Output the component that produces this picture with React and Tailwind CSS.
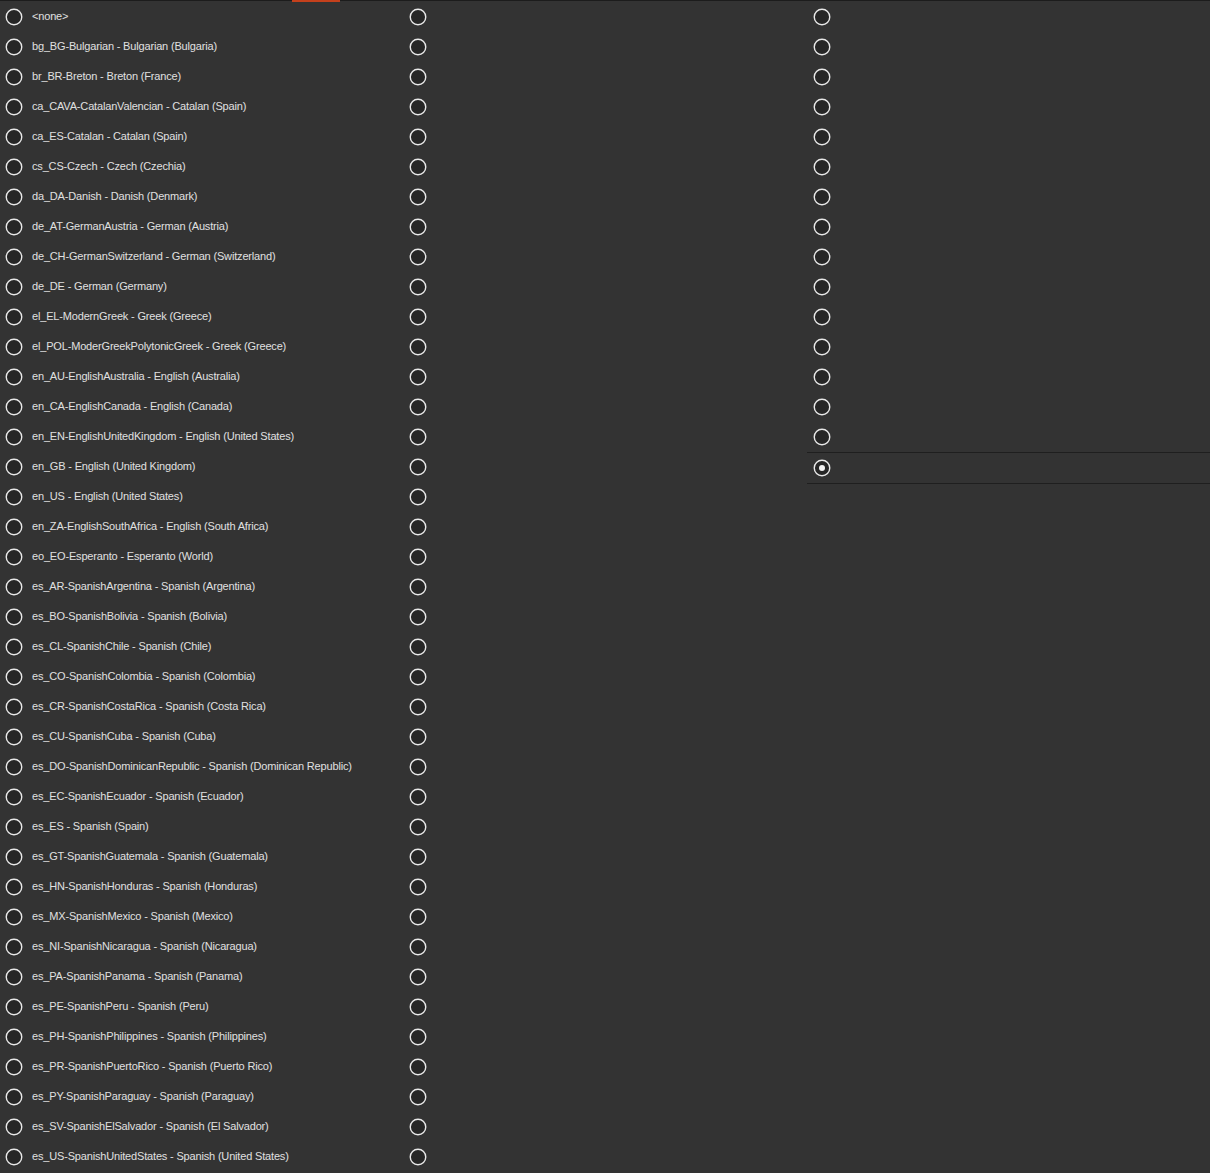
import React from "react";

const langs = [
  "<none>",
  "bg_BG-Bulgarian - Bulgarian (Bulgaria)",
  "br_BR-Breton - Breton (France)",
  "ca_CAVA-CatalanValencian - Catalan (Spain)",
  "ca_ES-Catalan - Catalan (Spain)",
  "cs_CS-Czech - Czech (Czechia)",
  "da_DA-Danish - Danish (Denmark)",
  "de_AT-GermanAustria - German (Austria)",
  "de_CH-GermanSwitzerland - German (Switzerland)",
  "de_DE - German (Germany)",
  "el_EL-ModernGreek - Greek (Greece)",
  "el_POL-ModerGreekPolytonicGreek - Greek (Greece)",
  "en_AU-EnglishAustralia - English (Australia)",
  "en_CA-EnglishCanada - English (Canada)",
  "en_EN-EnglishUnitedKingdom - English (United States)",
  "en_GB - English (United Kingdom)",
  "en_US - English (United States)",
  "en_ZA-EnglishSouthAfrica - English (South Africa)",
  "eo_EO-Esperanto - Esperanto (World)",
  "es_AR-SpanishArgentina - Spanish (Argentina)",
  "es_BO-SpanishBolivia - Spanish (Bolivia)",
  "es_CL-SpanishChile - Spanish (Chile)",
  "es_CO-SpanishColombia - Spanish (Colombia)",
  "es_CR-SpanishCostaRica - Spanish (Costa Rica)",
  "es_CU-SpanishCuba - Spanish (Cuba)",
  "es_DO-SpanishDominicanRepublic - Spanish (Dominican Republic)",
  "es_EC-SpanishEcuador - Spanish (Ecuador)",
  "es_ES - Spanish (Spain)",
  "es_GT-SpanishGuatemala - Spanish (Guatemala)",
  "es_HN-SpanishHonduras - Spanish (Honduras)",
  "es_MX-SpanishMexico - Spanish (Mexico)",
  "es_NI-SpanishNicaragua - Spanish (Nicaragua)",
  "es_PA-SpanishPanama - Spanish (Panama)",
  "es_PE-SpanishPeru - Spanish (Peru)",
  "es_PH-SpanishPhilippines - Spanish (Philippines)",
  "es_PR-SpanishPuertoRico - Spanish (Puerto Rico)",
  "es_PY-SpanishParaguay - Spanish (Paraguay)",
  "es_SV-SpanishElSalvador - Spanish (El Salvador)",
  "es_US-SpanishUnitedStates - Spanish (United States)",
];

function Radio({ checked }) {
  return (
    <svg width="18" height="18" viewBox="0 0 18 18" className="shrink-0">
      <circle cx="9" cy="9" r="7.75" fill="#262626" stroke="#e8e8e8" strokeWidth="1.4" />
      {checked && <circle cx="9" cy="9" r="3" fill="#f2f2f2" />}
    </svg>
  );
}

function Row({ label }) {
  return (
    <div className="flex h-[30px] items-center pl-[5px]">
      <Radio />
      {label && (
        <span className="ml-[9px] mb-[2px] text-[11px] tracking-[-0.17px] text-[#e0e0e0] whitespace-nowrap font-[Arial,'Liberation_Sans',sans-serif]">
          {label}
        </span>
      )}
    </div>
  );
}

export default function App() {
  return (
    <div className="relative w-[1210px] h-[1173px] bg-[#333333] overflow-hidden font-[Arial,'Liberation_Sans',sans-serif]">
      <div className="h-px bg-[#1c1c1c]" />
      <div className="absolute left-[292px] top-0 w-[48px] h-[2px] bg-[#c4401c]" />
      <div className="mt-px grid grid-cols-[404px_404px_402px]">
        <div className="flex flex-col">
          {langs.map((l) => (
            <Row key={l} label={l} />
          ))}
        </div>
        <div className="flex flex-col">
          {langs.map((l) => (
            <Row key={l} />
          ))}
        </div>
        <div className="flex flex-col">
          {langs.slice(0, 15).map((l) => (
            <Row key={l} />
          ))}
          <div className="-ml-px flex h-[32px] items-center border-y border-[#1f1f1f] pl-[6px]">
            <Radio checked />
          </div>
        </div>
      </div>
    </div>
  );
}
